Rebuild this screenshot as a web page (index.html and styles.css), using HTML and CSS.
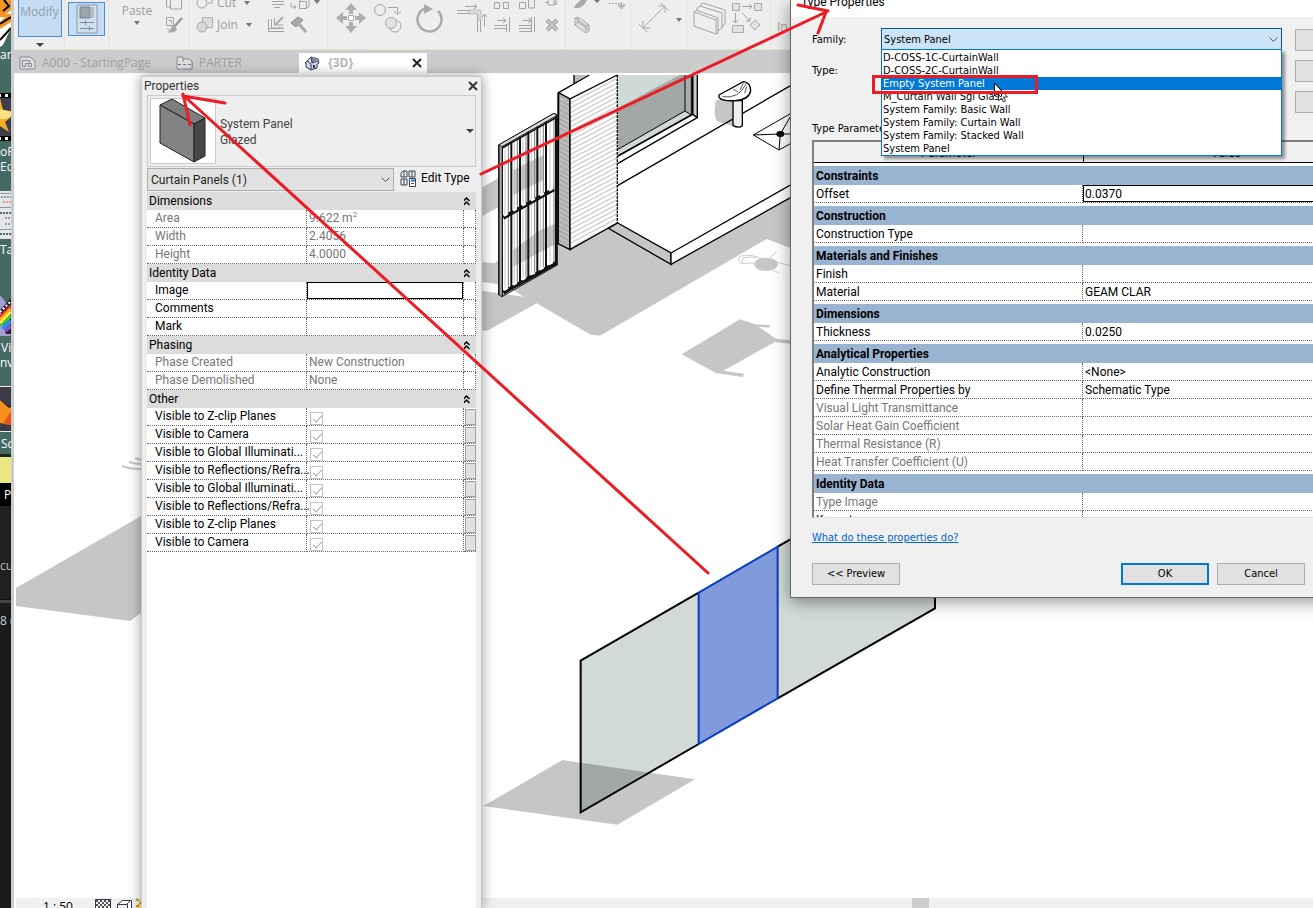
FILE: index.html
```html
<!DOCTYPE html>
<html lang="en">
<head>
<meta charset="utf-8">
<title>Type Properties</title>
<link rel="stylesheet" href="styles.css">
</head>
<body>
<div class="desktop">
  <aside class="dock">
    <svg class="pic" width="11" height="47" viewBox="0 0 11 47"><path d="M0 0h11v40L0 47z" fill="#fff"/><path d="M11 0v10L6 14h5v8L0 29v-7l5-5H0V0z" fill="#f7941d"/><path d="M4 0 9 6 3 11M11 17 0 24M11 28 0 40" stroke="#000" stroke-width="2" fill="none"/><path d="M11 28v19H2z" fill="#456a62"/></svg>
    <span class="cap">am</span>
    <svg class="pic star" width="11" height="48" viewBox="0 0 11 48"><path fill="#000" d="M0 0h11v48H0z"/><path fill="#fff" d="M0 1h1v3H0zM5 1h3v3H5zM0 44h1v3H0zM5 44h3v3H5z"/><path fill="#3d3d4c" d="M0 5h11v38H0z"/><path fill="#f4b223" d="M0 5l3 12 8 1v6l-6 5 4 10-9-6z"/><path fill="#fbe08a" d="M0 16l11 3v4l-5 3H0z"/></svg>
    <span class="cap">oP</span><span class="cap">Ed</span>
    <svg class="pic doc" width="11" height="48" viewBox="0 0 11 48"><path fill="#e3e7ea" d="M0 0h11v48H0z"/><path stroke="#8b98a5" stroke-width="1" d="M0 2.500h11M0 16.500h11M0 38.500h11"/><path stroke="#99a" stroke-width="2" stroke-dasharray="2 1" d="M1 6h10M5 27h6M5 33h6"/><path stroke="#e99" stroke-width="2" stroke-dasharray="2 1" d="M3 11h8"/><path stroke="#567" stroke-width="2" stroke-dasharray="2 1" d="M0 22h11M0 43h11"/></svg>
    <span class="cap">Tap</span>
    <svg class="pic film" width="11" height="42" viewBox="0 0 11 42"><path fill="#a79bd6" d="M0 1l7 9-4 10 8 22H0z"/><path fill="#222" d="M0 16 11 4v36H6z"/><path stroke="#fff" stroke-width="2" stroke-dasharray="2 2" d="M0 18 11 7"/><path stroke="#e33" stroke-width="3" d="M0 23 11 12"/><path stroke="#fa2" stroke-width="3" d="M0 26 11 15"/><path stroke="#fe3" stroke-width="3" d="M0 29 11 18"/><path stroke="#3c4" stroke-width="3" d="M1 32 11 22"/><path stroke="#38e" stroke-width="4" d="M3 35 11 27"/><path stroke="#94d" stroke-width="3" d="M6 37 11 32"/></svg>
    <span class="cap vi">Vi</span><span class="cap">nv</span>
    <svg class="pic flame" width="11" height="46" viewBox="0 0 11 46"><path fill="#eee" d="M0 0h11v46H0z"/><path fill="#3a3b47" d="M0 1h11v44H0z"/><path fill="#1c1d26" d="M0 13l9 8 2-2v6H0z"/><path fill="#f78f1e" d="M0 14l9 8 2-1v18L0 37z"/><path fill="#e8541a" d="M11 25v14l-8-1z"/></svg>
    <span class="cap sc">Sc</span>
    <span class="note"></span>
    <span class="cap black">P</span>
    <span class="cap cut">cut</span>
    <span class="cap last">8 (I</span>
  </aside>

  <main class="app">
    <header class="ribbon">
      <div class="group g-modify">
        <button class="modify">Modify</button>
        <svg width="10" height="5" viewBox="0 0 10 5"><path d="M1 0h8L5 4z" fill="#444"/></svg>
      </div>
      <div class="group g-props">
        <button class="toggle" aria-label="Properties palette"><svg width="22" height="30" viewBox="0 0 22 30"><path d="M1 1h20v28H1z" fill="#cfe0f0" stroke="#8d9aa6"/><path d="M4 3h10v11H4z" fill="#9ba3ab" stroke="#7d868f"/><path d="M15 3h3v11h-3z" fill="#b4bcc4"/><path d="M4 18.500h14M4 24.500h14M9.500 16v5M13.500 22v5" stroke="#7f8b96"/></svg></button>
      </div>
      <div class="group g-paste">
        <button class="paste">Paste<svg width="7" height="4" viewBox="0 0 7 4"><path d="M0 0h6L3 4z" fill="#777"/></svg></button>
        <div class="stack">
          <button class="tool" aria-label="Copy"><svg width="20" height="14" viewBox="166 0 20 14"><path d="M167.500-3v10h4M171.500-3v12h11V-3" class="l"/></svg></button>
          <button class="tool" aria-label="Match"><svg width="20" height="22" viewBox="166 14 20 22"><path d="M167.500 17.500h7v8h-7zM169.500 20.500h3v3M168 28l4 4 3-2" class="l"/><path d="M183 18l-8 9" stroke="#999" stroke-width="2.500"/><path d="M174 25l4 4c-1 4-6 4-10 3 4-1 3-4 6-7z" fill="#aaa"/></svg></button>
        </div>
      </div>
      <div class="group g-geo">
        <div class="stack">
          <button class="tool text"><svg width="24" height="14" viewBox="193 0 24 14"><path d="M204-4h8v7h-4" class="l"/><circle cx="202" cy="3" r="5" class="l"/></svg>Cut<i class="caret"></i></button>
          <button class="tool text"><svg width="24" height="22" viewBox="193 14 24 22"><path d="M202.500 17.500h10v10h-10z" fill="#ddd" stroke="#b0b0b0"/><circle cx="202" cy="27" r="5" fill="#d8d8d8" stroke="#a8a8a8"/></svg>Join<i class="caret"></i></button>
        </div>
        <div class="stack">
          <button class="tool" aria-label="Cope"><svg width="28" height="14" viewBox="260 0 28 14"><path d="M272 1.500h12M272 4.500h12M274 7.500h6" class="l"/></svg></button>
          <button class="tool" aria-label="Wall joins"><svg width="28" height="22" viewBox="260 14 28 22"><path d="M268.500 19v12M271.500 19v9h12M268 31.500h16M274.500 18v7h9M268 28.500h16" class="l"/><path d="M283 17l-8 8" stroke="#aaa" stroke-width="2"/></svg></button>
        </div>
        <div class="stack">
          <button class="tool" aria-label="Split face"><svg width="34" height="14" viewBox="290 0 34 14"><path d="M301.500 1.500h7v7h-7zM301 2l3-3h7v7l-3 3M293 3v4h5M296 5l2 2-2 2" class="l"/><path d="M316 0h6l-3 4z" fill="#777"/></svg></button>
          <button class="tool" aria-label="Demolish"><svg width="34" height="22" viewBox="290 14 34 22"><path d="M293 23l7-6 5 3-7 7z" fill="#aaa" stroke="#888"/><path d="M300 23l8 9" stroke="#aaa" stroke-width="3"/></svg></button>
        </div>
      </div>
      <div class="group g-edit">
        <button class="tool" aria-label="Move"><svg width="42" height="40" viewBox="330 0 42 40"><path d="M351 3l6 7h-4v4h-4v-4h-4zM351 33l6-7h-4v-4h-4v4h-4zM336 18l7-6v4h4v4h-4v4zM366 18l-7-6v4h-4v4h4v4z" fill="#aeaeae"/><path d="M348.500 15.500h5v5h-5z" fill="#fff" stroke="#aaa"/></svg></button>
        <button class="tool" aria-label="Copy element"><svg width="36" height="40" viewBox="372 0 36 40"><circle cx="382" cy="10" r="5.500" class="l"/><circle cx="397" cy="26" r="6" class="l"/><circle cx="393" cy="23" r="5.500" fill="#e2e2e2" stroke="#aaa"/><path d="M390 7.500h9.500v6M396 11l3.500 3.500L403 11" class="l"/></svg></button>
        <button class="tool" aria-label="Rotate"><svg width="38" height="40" viewBox="410 0 38 40"><path d="M438 11a12 12 0 1 1-12-3" fill="none" stroke="#ababab" stroke-width="2.500"/><path d="M424 4l9 5-9 5z" fill="#aaa"/></svg></button>
        <button class="tool" aria-label="Trim"><svg width="40" height="40" viewBox="446 0 40 40"><path d="M461 6.500h12M470 4l3 2.500L470 9M453 10.500h21M453 13.500h19M473.500 15v17M476.500 11v21M480.500 27V15M478 17l2.500-3 2.500 3" class="l"/><path d="M465 10h12v10h-3v-6h-9z" fill="#ddd" stroke="#bbb"/></svg></button>
        <div class="stack">
          <button class="tool" aria-label="Split"><svg width="26" height="14" viewBox="490 0 26 14"><path d="M494.500 2.500h5v6h-5zM503.500 2.500h5v6h-5z" class="l"/></svg></button>
          <button class="tool" aria-label="Align"><svg width="26" height="22" viewBox="490 14 26 22"><path d="M497 20.500h9M503 18l3 2.500-3 2.500M494 25.500h12M494 28.500h12M506.500 24v8M509.500 17v15" class="l"/></svg></button>
        </div>
        <div class="stack">
          <button class="tool" aria-label="Array"><svg width="26" height="14" viewBox="516 0 26 14"><path d="M519.500 2.500h6v6h-6zM528.500-2v10h6V-2z" class="l"/></svg></button>
          <button class="tool" aria-label="Offset"><svg width="26" height="22" viewBox="516 14 26 22"><path d="M522 20.500h9M528 18l3 2.500-3 2.500M519 25.500h12M519 28.500h12M519 31.500h12M531.500 17v15M534.500 17v15" class="l"/></svg></button>
        </div>
        <div class="stack">
          <button class="tool" aria-label="Pin"><svg width="20" height="14" viewBox="542 0 20 14"><path d="M545 2.500h3V-1h6v6h-6V2M556-1v6M554 4h3" class="l"/></svg></button>
          <button class="tool" aria-label="Delete"><svg width="20" height="22" viewBox="542 14 20 22"><path d="M547 20l10 10M557 20l-10 10" stroke="#999" stroke-width="4"/><path d="M547 20l10 10M557 20l-10 10" stroke="#ccc" stroke-width="2"/></svg></button>
        </div>
      </div>
      <div class="group g-view">
        <div class="stack">
          <button class="tool" aria-label="Paint"><svg width="60" height="14" viewBox="568 0 60 14"><path d="M574 8c2-5 4-5 8-9l5 1c-3 6-7 9-13 8z" fill="#aaa"/><path d="M594 0h6l-3 3z" fill="#777"/><path d="M609 3.500h12" stroke="#aaa" stroke-dasharray="2 1"/><path d="M621.500 2v5M618 5h7l-3.500 4z" fill="#ccc" stroke="#aaa"/></svg></button>
          <button class="tool" aria-label="Linework"><svg width="60" height="22" viewBox="568 14 60 22"><path d="M575 18l3-1 11 8v6l-3 2-11-8z" fill="#e2e2e2" stroke="#aaa"/><path d="M575 18l11 8v6M586 26l3-1M578 17v5l11 8M578 22l-3 3" class="l"/></svg></button>
        </div>
      </div>
      <div class="group g-measure">
        <button class="tool" aria-label="Measure"><svg width="52" height="40" viewBox="633 0 52 40"><path d="M643 28l22-22M643 21v7h7M658 6h7v7M639 24l8 8M661 3l8 8" fill="none" stroke="#aaa"/><path d="M676 18h6l-3 4z" fill="#777"/></svg></button>
      </div>
      <div class="group g-create">
        <button class="tool" aria-label="Create assembly"><svg width="40" height="40" viewBox="690 0 40 40"><path d="M701 4l2-1 22 7v14l-3 3-21-8z" fill="#eee" stroke="#a4a4a4"/><path d="M697 8l3-2 22 7v15l-3 2-22-8z" fill="#eee" stroke="#a4a4a4"/><path d="M694 12l2-2 22 8v15l-2 1-22-8z" fill="#eee" stroke="#a4a4a4"/><path d="M694 12l22 8v14M716 20l2-2" class="l"/></svg></button>
        <button class="tool" aria-label="Create group"><svg width="34" height="40" viewBox="730 0 34 40"><path d="M732.500 3.500h7v7h-7zM754.500 3.500h7v7h-7zM732.500 25.500h11v7h-11zM755 20l5 5-5 5-5-5z" fill="#e2e2e2" stroke="#aaa"/><path d="M742 6.500h10M749 4l3 2.500-3 2.500M735.500 13v9M733 20l2.500 3 2.500-3M742 13l8 8M750 17v4h-4" class="l"/></svg></button>
      </div>
      <span class="cutoff">In</span>
    </header>

    <nav class="tabs">
      <button class="tab t1"><svg width="17" height="14" viewBox="0 0 17 14"><path d="M1 1h10l5 4v8H1z" fill="#ddd" stroke="#888b98"/><path d="M3.500 4.500h7v3h-4v3h-3zM9.500 7.500h3v3h-3z" fill="none" stroke="#888b98"/></svg>A000 - StartingPage</button>
      <button class="tab t2"><svg width="17" height="14" viewBox="0 0 17 14"><path d="M1 1h6v4h9v8H1z" fill="#ddd" stroke="#888b98"/><path d="M8 3h5l3 3v7H8" fill="#ddd" stroke="#888b98"/><path d="M2 8.500h3M7 8.500h3M12 8.500h3" stroke="#777"/></svg>PARTER</button>
      <div class="tab active"><svg width="16" height="16" viewBox="0 0 16 16"><path d="M2 7l5-5 7 2 1 4-2 1v4l-6 2-5-3V8L1 8z" fill="#d5dbe5" stroke="#333b4a"/><path d="M7 2l1 6 6-4z" fill="#7a8698"/><path d="M7 2l1 6 6-2M7 2 3 6l4 3v6" fill="none" stroke="#333b4a"/><path d="M9 10h2v3H9z" fill="#333b4a"/></svg><b>{3D}</b><button class="x" aria-label="Close view"><svg width="10" height="10" viewBox="0 0 10 10"><path d="M1 1l8 8M9 1 1 9" stroke="#222" stroke-width="2"/></svg></button></div>
    </nav>

    <section class="canvas">
      <svg class="scene" width="1299" height="825" viewBox="14 73 1299 825">
        <defs>
          <pattern id="brick" width="20" height="14" patternUnits="userSpaceOnUse" patternTransform="skewY(-28)"><path d="M0 6h20" stroke="#cfcfcf" stroke-width="5"/></pattern>
          <pattern id="brickside" width="20" height="14" patternUnits="userSpaceOnUse" patternTransform="skewY(28)"><path fill="#bdbdbd" d="M0 0h20v14H0z"/><path d="M0 6h20" stroke="#999" stroke-width="3"/></pattern>
        </defs>
        <path d="M16 588 141 516v97l-11 8-114-15z" fill="#c6c6c6"/>
        <path d="M122 466q8 3 19 3M129 462q6 2 12 2M135 458l6 2" fill="none" stroke="#c6c6c6" stroke-width="2"/>
        <g transform="translate(480 70) scale(.33333)">
          <g fill="#c6c6c6">
            <path d="M230 510 385 475l188 108 360-200v152l-73-28L360 797l-28-3-162-94L22 782H7V663l123 17-30-20 130-80z"/>
            <path d="M7 352l48-27v87L7 438zM7 576l38 4 10-10v73l-48-7z"/>
            <path d="M100 300l90-45v75l-90 45zM100 540l80-60 50-20v60l-130 70z"/>
            <path d="M605 853 780 748l45 15 45 2-2 8-33-3 53 36 45 5v11l-48-6-155 86 62 9-3 10-82-12z"/>
            <ellipse cx="858" cy="583" rx="35" ry="20"/>
            <path d="M833 578 785 581q-15-5-5-22 30-10 72 10M785 581l5-18q25-5 40 2M870 565l20-22M885 575l45 12M872 597l25 12" fill="none" stroke="#ccc" stroke-width="3"/>
            <path d="M708 90q-10 50 5 65l45 13V88z"/>
          </g>
          <g stroke="#000" stroke-width="4" fill="none">
            <path d="M282 15v25l40-25z" fill="#bbb" stroke="none"/><path d="M282 15v25"/>
            <path d="M236 68 328 15h84L270 87z" fill="#fff" stroke="none"/>
            <path d="M236 68l34 19v452l-36-18z" fill="url(#brickside)"/>
            <path d="M270 87 412 15v444L270 539z" fill="#fff" stroke="none"/>
            <path d="M270 87 412 15v444L270 539z" fill="url(#brick)" stroke="none"/>
            <path d="M270 539V87l142-72M236 68l92-53M270 539l142-80M234 521V68" /><path d="M412 15v444" stroke-dasharray="8 3"/>
            <path d="M414 15h238v128L414 283z" fill="#fff" stroke="none"/>
            <path d="M414 15h220v118L414 260z" fill="#d0dad5" stroke="none"/>
            <path d="M414 113 600 15h15v108L414 238z" fill="#a1a8a5" stroke="none"/>
            <path d="M615 15h19v118l-19-10z" fill="#a6aeaa" stroke="none"/><path d="M638 15h14v128l-14-10z" fill="#c9cdcb" stroke="none"/>
            <path d="M615 15v108L414 238M634 15v118M615 123l19 12" stroke-width="3"/>
            <path d="M638 15v118L414 258" stroke-width="5"/><path d="M652 15v128L414 280M638 133l14 10"/>
            <path d="M414 346 933 46"/>
            <path d="M385 475l28-16 160 90v34z" fill="#c6c6c6"/>
            <path d="M573 549 933 344v38L573 583z" fill="#fff"/>
            <path d="M933 130 820 195l77 45 36-20M820 195l81-3 32 0M901 192l32-55M901 192l-4 48" stroke-width="3"/><ellipse cx="901" cy="192" rx="10" ry="7" fill="#000"/>
            <path d="M759 92h28v75q-10 9-28 0z" fill="#eee"/>
            <path d="M717 75 790 35q22 2 22 28-5 26-47 29-40 2-48-10z" fill="#fff"/><path d="M727 80q50 8 72-40M760 57l14 9M790 40l-10 20M800 50l-6 20" stroke-width="2"/>
          </g>
          <g stroke="#111" fill="none">
            <path d="M56 225 222 130l10 5v450L66 680l-10-6z" stroke-width="3"/>
            <path d="M56 225l166-95 10 6L66 230z" fill="#ddd" stroke-width="3"/>
            <path d="M62 230v446" stroke="#aaa" stroke-width="6"/>
            <path d="M57 226v450M67 230v450" stroke-width="4"/>
            <path d="M85 220v445M112 205v445M138 190v445M164 175v445M190 160v445M222 142v445" stroke="#777" stroke-width="3"/>
            <path d="M94 215v445M120 200v445M145 185v445M172 170v445M198 155v445M228 137v445" stroke-width="6"/>
            <path d="M75 225v440M103 208v440M129 195v440M154 180v440M181 165v440M210 150v440" stroke="#aaa" stroke-width="2"/>
            <path d="M70 443 222 358M70 668l160-90" stroke-width="12"/>
            <path d="M72 437l150-84M72 660l150-86" stroke="#fff" stroke-width="7" stroke-dasharray="13 18"/>
            <path d="M66 234l164-92" stroke-width="5"/>
          </g>
        </g>
        <g transform="translate(480 530) scale(.33333)">
          <path d="M10 828 247 690l398 58-233 136z" fill="#c6c6c6"/>
          <path d="M302 392 656 188v454L302 847z" fill="#d1dad5"/>
          <path d="M302 698l198 29-198 118z" fill="#a1a8a5"/>
          <path d="M893 50l472-270v455L893 505z" fill="#d1dad5"/>
          <path d="M656 188 302 392v455l354-205M893 50l472-270v455L893 505" fill="none" stroke="#000" stroke-width="6"/>
          <path d="M656 188 893 50v455L656 642z" fill="#7f9bdc" stroke="#083cc4" stroke-width="6"/>
        </g>
      </svg>
    </section>
    <footer class="status">
      <span>1 : 50</span>
      <svg width="50" height="12" viewBox="95 898 50 12"><defs><pattern id="chk" width="4" height="4" patternUnits="userSpaceOnUse"><path d="M0 0h2v2H0zM2 2h2v2H2z" fill="#555"/></pattern></defs><path d="M95.500 899.500h15v12h-15z" fill="url(#chk)" stroke="#333b4a"/><path d="M117.500 904.500l5-4h9v8h-4v-4h-10zM127 904l4-4M117.500 904v8" fill="#fff" stroke="#333b4a"/><path d="M136 899l3 2M136 906h2M141 901v10" stroke="#c90" stroke-width="2"/><circle cx="142" cy="907" r="4" fill="#fd6" stroke="#b80"/></svg>
      <i class="thumb"></i>
    </footer>
  </main>
</div>

<section class="palette">
  <header class="palette-title"><span>Properties</span><button class="x" aria-label="Close"><svg width="10" height="10" viewBox="0 0 10 10"><path d="M1 1l8 8M9 1 1 9" stroke="#333" stroke-width="2"/></svg></button></header>
  <div class="palette-body">
    <div class="type">
      <svg class="thumbnail" width="66" height="66" viewBox="0 0 66 66"><path d="M.5.500h65v65H.5z" fill="#fff" stroke="#ccc"/><path d="M10 7 22 1l33 19-11 6z" fill="#7d7d7d" stroke="#222"/><path d="M10 7l34 19v38L10 45z" fill="#838383" stroke="#222"/><path d="M44 26l11-6v38l-11 6z" fill="#474747" stroke="#222"/></svg>
      <p>System Panel<br>Glazed</p>
      <svg width="8" height="5" viewBox="0 0 8 5"><path d="M0 0h8L4 4z" fill="#444"/></svg>
    </div>
    <div class="filter">
      <label class="combo"><select aria-label="Selection filter"><option>Curtain Panels (1)</option></select><svg width="9" height="6" viewBox="0 0 9 6"><path d="M.5.500l4 4 4-4" fill="none" stroke="#555"/></svg></label>
      <button class="edit-type"><svg width="17" height="17" viewBox="0 0 17 17"><path d="M1 3l2-2h4v6H1zM9 1h6v6H9zM1 9h6v6H1zM4 1v6M12 1v6M4 9v6" fill="none" stroke="#3c4656"/><path d="M9.500 8.500h6v8h-6z" fill="#fff" stroke="#3c4656"/><path d="M11 10.500h4" stroke="#1878d0" stroke-width="2"/><path d="M11 13.500h3" stroke="#555"/></svg>Edit Type</button>
    </div>
    <table class="props">
      <colgroup><col class="c1"><col><col class="c3"></colgroup>
      <tr class="sec"><th colspan="2">Dimensions</th><th><svg width="7" height="9" viewBox="0 0 7 9"><path d="M.5 4l3-3 3 3M.5 8l3-3 3 3" class="chev"/></svg></th></tr>
      <tr class="off"><td>Area</td><td>9.622 m<sup>2</sup></td><td></td></tr>
      <tr class="off"><td>Width</td><td>2.4056</td><td></td></tr>
      <tr class="off"><td>Height</td><td>4.0000</td><td></td></tr>
      <tr class="sec"><th colspan="2">Identity Data</th><th><svg width="7" height="9" viewBox="0 0 7 9"><path d="M.5 4l3-3 3 3M.5 8l3-3 3 3" class="chev"/></svg></th></tr>
      <tr><td>Image</td><td class="field"><input type="text" aria-label="Image"></td><td></td></tr>
      <tr><td>Comments</td><td></td><td></td></tr>
      <tr><td>Mark</td><td></td><td></td></tr>
      <tr class="sec"><th colspan="2">Phasing</th><th><svg width="7" height="9" viewBox="0 0 7 9"><path d="M.5 4l3-3 3 3M.5 8l3-3 3 3" class="chev"/></svg></th></tr>
      <tr class="off"><td>Phase Created</td><td>New Construction</td><td></td></tr>
      <tr class="off"><td>Phase Demolished</td><td>None</td><td></td></tr>
      <tr class="sec"><th colspan="2">Other</th><th><svg width="7" height="9" viewBox="0 0 7 9"><path d="M.5 4l3-3 3 3M.5 8l3-3 3 3" class="chev"/></svg></th></tr>
      <tr><td><label for="v1">Visible to Z-clip Planes</label></td><td><input type="checkbox" id="v1" checked disabled></td><td class="btn"><button aria-label="Associate"></button></td></tr>
      <tr><td><label for="v2">Visible to Camera</label></td><td><input type="checkbox" id="v2" checked disabled></td><td class="btn"><button aria-label="Associate"></button></td></tr>
      <tr><td><label for="v3">Visible to Global Illuminati...</label></td><td><input type="checkbox" id="v3" checked disabled></td><td class="btn"><button aria-label="Associate"></button></td></tr>
      <tr><td><label for="v4">Visible to Reflections/Refra...</label></td><td><input type="checkbox" id="v4" checked disabled></td><td class="btn"><button aria-label="Associate"></button></td></tr>
      <tr><td><label for="v5">Visible to Global Illuminati...</label></td><td><input type="checkbox" id="v5" checked disabled></td><td class="btn"><button aria-label="Associate"></button></td></tr>
      <tr><td><label for="v6">Visible to Reflections/Refra...</label></td><td><input type="checkbox" id="v6" checked disabled></td><td class="btn"><button aria-label="Associate"></button></td></tr>
      <tr><td><label for="v7">Visible to Z-clip Planes</label></td><td><input type="checkbox" id="v7" checked disabled></td><td class="btn"><button aria-label="Associate"></button></td></tr>
      <tr><td><label for="v8">Visible to Camera</label></td><td><input type="checkbox" id="v8" checked disabled></td><td class="btn"><button aria-label="Associate"></button></td></tr>
    </table>
    <div class="blank"></div>
  </div>
</section>

<section class="dialog">
  <header class="dialog-title">Type Properties</header>
  <div class="dialog-body">
    <div class="form">
      <label for="family">Family:</label>
      <div class="combo open">
        <select id="family"><option>System Panel</option></select><svg width="9" height="6" viewBox="0 0 9 6"><path d="M.5.500l4 4 4-4" fill="none" stroke="#555"/></svg>
        <ul class="list">
          <li>D-COSS-1C-CurtainWall</li><li>D-COSS-2C-CurtainWall</li><li class="sel">Empty System Panel</li><li>M_Curtain Wall Sgl Glass</li><li>System Family: Basic Wall</li><li>System Family: Curtain Wall</li><li>System Family: Stacked Wall</li><li>System Panel</li>
        </ul>
      </div>
      <button class="push" aria-label="Load"></button>
      <span>Type:</span><span></span><button class="push" aria-label="Duplicate"></button>
      <span></span><span></span><button class="push" aria-label="Rename"></button>
    </div>
    <p class="caption">Type Parameters</p>
    <div class="grid">
      <table class="params">
        <colgroup><col class="p1"><col></colgroup>
        <tr class="head"><th>Parameter</th><th>Value</th></tr>
        <tr class="sec"><th colspan="2">Constraints</th></tr>
        <tr><td>Offset</td><td class="field"><input type="text" aria-label="Offset" value="0.0370"></td></tr>
        <tr class="sec"><th colspan="2">Construction</th></tr>
        <tr><td>Construction Type</td><td></td></tr>
        <tr class="sec"><th colspan="2">Materials and Finishes</th></tr>
        <tr><td>Finish</td><td></td></tr>
        <tr><td>Material</td><td>GEAM CLAR</td></tr>
        <tr class="sec"><th colspan="2">Dimensions</th></tr>
        <tr><td>Thickness</td><td>0.0250</td></tr>
        <tr class="sec"><th colspan="2">Analytical Properties</th></tr>
        <tr><td>Analytic Construction</td><td>&lt;None&gt;</td></tr>
        <tr><td>Define Thermal Properties by</td><td>Schematic Type</td></tr>
        <tr class="off"><td>Visual Light Transmittance</td><td></td></tr>
        <tr class="off"><td>Solar Heat Gain Coefficient</td><td></td></tr>
        <tr class="off"><td>Thermal Resistance (R)</td><td></td></tr>
        <tr class="off"><td>Heat Transfer Coefficient (U)</td><td></td></tr>
        <tr class="sec"><th colspan="2">Identity Data</th></tr>
        <tr class="off"><td>Type Image</td><td></td></tr>
        <tr><td>Keynote</td><td></td></tr>
      </table>
    </div>
    <a class="help" href="#">What do these properties do?</a>
    <div class="actions">
      <button class="push">&lt;&lt; Preview</button>
      <button class="push default">OK</button>
      <button class="push">Cancel</button>
    </div>
  </div>
</section>

<svg class="marks" width="1313" height="908" viewBox="0 0 1313 908">
  <g fill="none" stroke="#ed1c24" stroke-width="3" stroke-linecap="round">
    <path d="M481 174 826 12M798 5l30 6M818 33l8-21"/>
    <path d="M708 573 183 95M190 125l-7-31M183 96l42 7"/>
    <path d="M873.500 76.500h163v16h-163z" stroke-linecap="butt"/>
  </g>
  <path d="M998.500 87v14l3-3 2 4 2-1-2-4h4z" fill="#fff" stroke="#333"/>
  <path d="M994.500 83v13l3-3 3 4 1-1v-3h2z" fill="#fff" stroke="#000"/>
  <path d="M873.500 92.500h164" stroke="#ed1c24" stroke-width="3"/>
</svg>
</body>
</html>
```
FILE: styles.css
```css
* { box-sizing: border-box; }
body {
  margin: 0;
  position: relative;
  height: 100vh;
  overflow: hidden;
  font: 12px/18px "Open Sans", "Noto Sans", sans-serif;
  color: #000;
  background: #fff;
}
button, select, input { font: inherit; color: inherit; margin: 0; padding: 0; border: 0; background: none; border-radius: 0; outline: 0; }
svg { display: block; flex: none; }
.l { fill: none; stroke: #a4a4a4; }
.chev { fill: none; stroke: #000; stroke-width: 1.5; }

.desktop { display: flex; height: 100%; }

/* desktop strip on the left */
.dock { width: 11px; flex: none; overflow: hidden; display: flex; flex-direction: column; background: #456a62; color: #fff; white-space: nowrap; line-height: 15px; }
.cap { flex: none; height: 15px; overflow: hidden; }
.star { margin: 31px 0 3px; }
.doc { margin: 17px 0 3px; }
.film { margin: 37px 0 4px; }
.vi { padding-left: 1px; }
.flame { margin: 16px 0 4px; }
.sc { height: 18px; padding-left: 1px; }
.note { flex: none; height: 29px; background: #e9e97f; border-top: 3px solid #222; }
.black { height: 23px; padding: 4px 0 0 4px; background: #000; }
.cut { height: 94px; padding-top: 52px; background: #202020; border-bottom: 1px solid #111; color: #bbb; }
.last { flex: 1; padding-top: 10px; background: #1a1a1a; border-top: 3px solid #444; color: #ccc; }

.app { flex: 1; min-width: 0; display: flex; flex-direction: column; border-left: 3px solid #ccc; overflow: hidden; }

/* ribbon */
.ribbon { height: 50px; flex: none; display: flex; background: #eee; border-bottom: 1px solid #dfe6cc; color: #9c9c9c; overflow: hidden; padding-left: 1px; }
.group { flex: none; display: flex; border-right: 1px solid #e2e8d2; }
.g-modify { width: 50px; flex-direction: column; align-items: center; gap: 6px; }
.modify { width: 44px; height: 37px; padding-bottom: 12px; background: #c5dcf2; border: 1px solid #4a90d9; border-top: 0; color: #8fa0b0; }
.g-props { width: 44px; padding: 2px 3px; }
.toggle { width: 38px; height: 34px; display: grid; place-items: center; background: #c5dcf2; border: 1px solid #4a90d9; }
.g-paste { width: 80px; padding: 2px 0 0 13px; }
.paste { width: 30px; height: 30px; display: flex; flex-direction: column; align-items: center; gap: 1px; }
.stack { display: flex; flex-direction: column; }
.tool { display: flex; overflow: hidden; }
.g-paste .stack { margin: -2px 0 0 13px; }
.g-geo { width: 139px; padding-left: 4px; }
.tool.text { align-items: center; width: 67px; }
.stack .tool.text:first-child { height: 14px; line-height: 14px; padding-bottom: 9px; overflow: visible; }
.stack .tool.text:first-child svg { margin-top: 9px; }
.caret { margin-left: 8px; border: 3px solid transparent; border-top: 4px solid #777; border-bottom: 0; }
.g-edit { width: 238px; padding-left: 2px; }
.g-edit > .tool { width: 40px; }
.g-view { width: 65px; padding-left: 2px; }
.g-measure { width: 56px; padding-left: 2px; }
.g-create { width: 84px; padding-left: 3px; }
.cutoff { padding: 18px 0 0 6px; }

/* view tabs */
.tabs { height: 23px; flex: none; display: flex; align-items: flex-end; background: #ccc; color: #a0a0a0; }
.tab { display: flex; align-items: center; gap: 6px; height: 20px; white-space: nowrap; }
.t1 { width: 157px; padding-left: 5px; }
.t2 { width: 128px; padding-left: 5px; }
.tab.active { width: 128px; padding: 0 5px; gap: 8px; background: #fff; color: #b8b8b8; }
.active .x { margin-left: auto; }

.canvas { flex: 1; min-height: 0; overflow: hidden; background: #fff; }
.status { height: 10px; flex: none; display: flex; align-items: flex-start; margin-left: 2px; background: #f0f0f0; overflow: hidden; }
.status span { width: 79px; padding-left: 27px; white-space: nowrap; }
.thumb { width: 17px; height: 10px; margin-left: 767px; background: #cdcdcd; }

/* properties palette */
.palette { position: absolute; left: 141px; top: 76px; bottom: 0; width: 341px; display: flex; flex-direction: column; background: #eee; border: 1px solid #c8c8c8; border-bottom: 0; box-shadow: 0 0 12px rgba(0, 0, 0, .4); font-family: Roboto, "Open Sans", sans-serif; }
.palette-title { display: flex; justify-content: space-between; align-items: center; height: 18px; padding: 0 3px 0 2px; color: #333; }
.palette-body { flex: 1; display: flex; flex-direction: column; padding: 0 5px; }
.type { display: flex; align-items: center; height: 72px; padding: 0 1px 0 2px; border: 1px solid #ccc; color: #444; }
.type p { flex: 1; margin: 2px 0 0 4px; line-height: 16px; }
.filter { display: flex; gap: 6px; padding: 1px 0; height: 25px; }
.combo { position: relative; display: grid; }
.combo select { grid-area: 1 / 1; width: 100%; appearance: none; }
.combo > svg { grid-area: 1 / 1; justify-self: end; align-self: center; margin-right: 4px; pointer-events: none; }
.filter .combo { width: 247px; height: 23px; }
.filter select { padding-left: 3px; border: 1px solid #adadad; background: #e1e1e1; color: #222; }
.edit-type { display: flex; align-items: center; gap: 4px; height: 20px; white-space: nowrap; }

table { border-spacing: 0; table-layout: fixed; width: 100%; }
td, th { padding: 0; font-weight: 400; text-align: left; white-space: nowrap; overflow: hidden; }
.props { background: #fff; }
.props tr, .params tr { height: 18px; }
td { height: 18px; line-height: 16px; border-bottom: 1px dotted #666; border-right: 1px dotted #666; }
.props td { line-height: 15px; }
.c1 { width: 160px; }
.c3 { width: 12px; }
.props td:first-child { padding-left: 8px; overflow: visible; }
.props td + td { padding-left: 2px; }
.props .sec th { height: 18px; line-height: 18px; padding-left: 2px; background: #dcdcdc; }
.props .sec th + th { padding-left: 0; }
.props .sec svg { margin-left: -1px; }
.off td { color: #777; }
sup { font-size: 8px; line-height: 0; }
.props td.field, .params td.field { padding: 0; }
.field input { display: block; width: 100%; height: 17px; border: 1px solid #000; background: #fff; }
.props td.btn { padding: 0; border-right: 0; }
.btn button { display: block; width: 11px; height: 16px; margin: 1px 0 0 1px; background: #e1e1e1; border: 1px solid #a0a0a0; }
input[type=checkbox] { appearance: none; display: block; width: 13px; height: 13px; margin: 3px 0 0 1px; border: 1px solid #c4c4c4; background: #fff; }
input[type=checkbox]::after { content: ""; display: block; width: 4px; height: 8px; margin: 0 0 0 4px; border: solid #a8a8a8; border-width: 0 1px 1px 0; transform: rotate(42deg); }
.blank { flex: 1; background: #fff; }

/* type properties dialog */
.dialog { position: absolute; left: 790px; top: 0; width: 602px; background: #f0f0f0; border: 1px solid #666; border-top: 0; box-shadow: 0 4px 16px rgba(0, 0, 0, .4); font-family: "DejaVu Sans Condensed", "DejaVu Sans", sans-serif; font-size: 11px; }
.dialog-title { height: 17px; padding-left: 10px; background: #fff; font: 12px/5px Roboto, "Open Sans", sans-serif; }
.dialog-body { padding: 11px 21px 12px; }
.form { display: grid; grid-template-columns: 69px 401px 88px; grid-auto-rows: 22px; row-gap: 9px; line-height: 24px; }
.form .push { margin: 1px 0 0 13px; }
.combo.open { height: 22px; line-height: 22px; }
.open select { padding-left: 2px; background: #cce4f7; border: 1px solid #0a5496; }
.list { position: absolute; z-index: 2; top: 21px; left: 0; width: 401px; margin: 0; padding: 1px 0 0; list-style: none; background: #fff; border: 1px solid #0078d7; box-shadow: 3px 3px 3px rgba(0, 0, 0, .4); line-height: 14px; }
.list li { height: 13px; padding-left: 1px; white-space: nowrap; }
.list .sel { background: #0078d7; color: #fff; }
.caption { margin: 8px 0 2px; line-height: 18px; }
.grid { height: 378px; overflow: hidden; border: 2px solid #808080; border-right-color: #fff; border-bottom: 1px solid #ddd; background: #fff; font: 12px/18px Roboto, "Open Sans", sans-serif; }
.p1 { width: 269px; }
.params .head th { height: 21px; padding-top: 3px; line-height: 17px; background: #f0f0f0; border-bottom: 1px solid #000; text-align: center; }
.params .head th + th { border-left: 1px solid #000; }
.params .sec th { height: 22px; line-height: 18px; padding-left: 2px; border-top: 3px solid #fff; background: #99b4d1; font-weight: 700; }
.params td { padding-left: 2px; }
.params td + td { border-right: 0; }
.params .field input { padding-left: 1px; }
.help { display: inline-block; margin-top: 11px; line-height: 18px; color: #0066cc; }
.actions { display: flex; gap: 8px; margin-top: 16px; }
.push { height: 22px; width: 88px; background: #e1e1e1; border: 1px solid #adadad; }
.push.default { margin-left: 213px; border: 2px solid #0078d7; }

.marks { position: absolute; left: 0; top: 0; pointer-events: none; z-index: 3; }
```
